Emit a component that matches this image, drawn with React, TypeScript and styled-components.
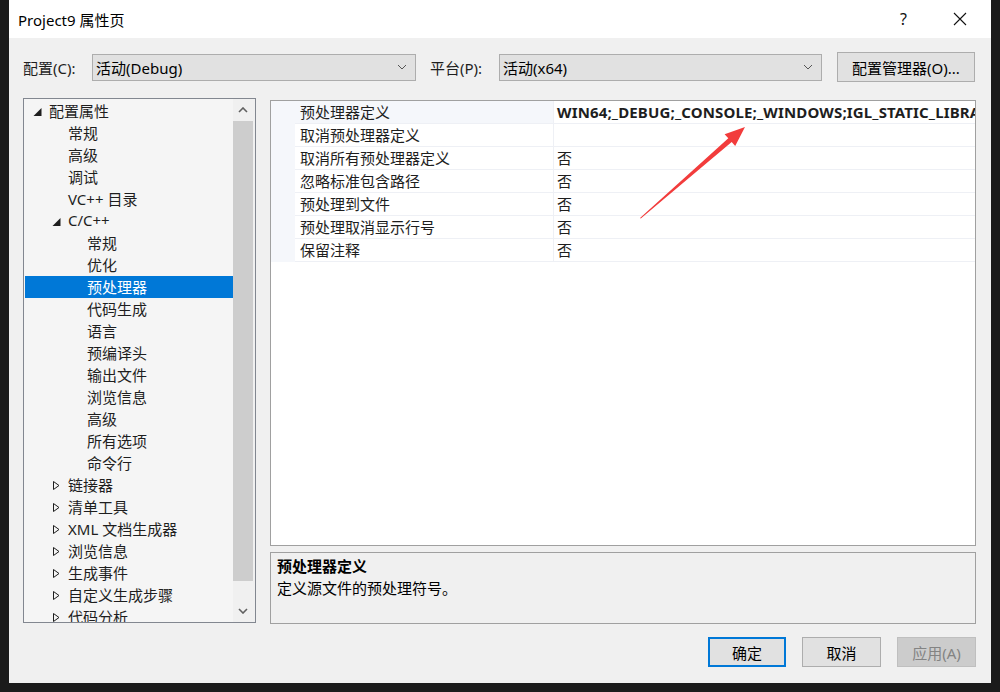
import styled, { createGlobalStyle } from 'styled-components';

const GlobalStyle = createGlobalStyle`
  html, body {
    margin: 0;
    padding: 0;
    background: #1b1b1b;
  }
  * {
    box-sizing: border-box;
  }
`;

type TreeNode = {
  label: string;
  level: number;
  toggle?: 'open' | 'closed';
  selected?: boolean;
};

const treeItems: TreeNode[] = [
  { label: '配置属性', level: 0, toggle: 'open' },
  { label: '常规', level: 1 },
  { label: '高级', level: 1 },
  { label: '调试', level: 1 },
  { label: 'VC++ 目录', level: 1 },
  { label: 'C/C++', level: 1, toggle: 'open' },
  { label: '常规', level: 2 },
  { label: '优化', level: 2 },
  { label: '预处理器', level: 2, selected: true },
  { label: '代码生成', level: 2 },
  { label: '语言', level: 2 },
  { label: '预编译头', level: 2 },
  { label: '输出文件', level: 2 },
  { label: '浏览信息', level: 2 },
  { label: '高级', level: 2 },
  { label: '所有选项', level: 2 },
  { label: '命令行', level: 2 },
  { label: '链接器', level: 1, toggle: 'closed' },
  { label: '清单工具', level: 1, toggle: 'closed' },
  { label: 'XML 文档生成器', level: 1, toggle: 'closed' },
  { label: '浏览信息', level: 1, toggle: 'closed' },
  { label: '生成事件', level: 1, toggle: 'closed' },
  { label: '自定义生成步骤', level: 1, toggle: 'closed' },
  { label: '代码分析', level: 1, toggle: 'closed' },
];

const props = [
  { name: '预处理器定义', value: 'WIN64;_DEBUG;_CONSOLE;_WINDOWS;IGL_STATIC_LIBRARY;%(PreprocessorDefinitions)', strong: true },
  { name: '取消预处理器定义', value: '' },
  { name: '取消所有预处理器定义', value: '否' },
  { name: '忽略标准包含路径', value: '否' },
  { name: '预处理到文件', value: '否' },
  { name: '预处理取消显示行号', value: '否' },
  { name: '保留注释', value: '否' },
];

function Toggle({ kind }: { kind?: 'open' | 'closed' }) {
  return (
    <ToggleBox>
      {kind === 'open' && (
        <svg width="16" height="22" viewBox="0 0 16 22">
          <polygon points="8.5,8 8.5,16 0.5,16" fill="#1e1e1e" />
        </svg>
      )}
      {kind === 'closed' && (
        <svg width="16" height="22" viewBox="0 0 16 22">
          <polygon points="1.5,7.5 7,11.5 1.5,15.5" fill="none" stroke="#1e1e1e" strokeWidth="1" />
        </svg>
      )}
    </ToggleBox>
  );
}

function Chevron({ up }: { up?: boolean }) {
  return (
    <svg width="10" height="6" viewBox="0 0 10 6">
      <polyline points={up ? '1,5 5,1 9,5' : '1,1 5,5 9,1'} fill="none" stroke="#606060" strokeWidth="1.6" />
    </svg>
  );
}

function SelectArrow() {
  return (
    <svg width="10" height="6" viewBox="0 0 10 6">
      <polyline points="1,1 5,5 9,1" fill="none" stroke="#555" strokeWidth="1" />
    </svg>
  );
}

function App() {
  return (
    <Page>
      <GlobalStyle />
      <Dialog>
        <TitleBar>
          <Title>Project9 属性页</Title>
          <TitleButtons>
            <HelpMark>?</HelpMark>
            <svg width="14" height="14" viewBox="0 0 14 14">
              <path d="M1 1 L13 13 M13 1 L1 13" stroke="#111" strokeWidth="1.1" />
            </svg>
          </TitleButtons>
        </TitleBar>

        <Body>
          <TopRow>
            <FieldLabel>配置(C):</FieldLabel>
            <Select width={324}>
              <span>活动(Debug)</span>
              <SelectArrow />
            </Select>
            <FieldLabel gap={14}>平台(P):</FieldLabel>
            <Select width={323}>
              <span>活动(x64)</span>
              <SelectArrow />
            </Select>
            <Button width={138} height={30} offset={15}>配置管理器(O)...</Button>
          </TopRow>

          <Main>
            <TreePanel>
              <TreeList>
                {treeItems.map((item, i) => (
                  <TreeRow key={i} level={item.level} selected={item.selected}>
                    <Toggle kind={item.toggle} />
                    <span>{item.label}</span>
                  </TreeRow>
                ))}
              </TreeList>
              <ScrollBar>
                <ScrollArrow><Chevron up /></ScrollArrow>
                <ScrollTrack>
                  <ScrollThumb />
                </ScrollTrack>
                <ScrollArrow><Chevron /></ScrollArrow>
              </ScrollBar>
            </TreePanel>

            <RightColumn>
              <Grid>
                {props.map((p, i) => (
                  <GridRow key={i}>
                    <Gutter />
                    <NameCell active={i === 0}>{p.name}</NameCell>
                    <ValueCell strong={p.strong}>{p.value}</ValueCell>
                  </GridRow>
                ))}
              </Grid>
              <Description>
                <DescTitle>预处理器定义</DescTitle>
                <DescText>定义源文件的预处理符号。</DescText>
              </Description>
            </RightColumn>
          </Main>

          <Footer>
            <Button width={78} height={30} primary>确定</Button>
            <Button width={79} height={30}>取消</Button>
            <Button width={79} height={30} disabled>应用(A)</Button>
          </Footer>
        </Body>
      </Dialog>

      <Annotation width="1000" height="692" viewBox="0 0 1000 692">
        <polygon
          points="640,218 728.3,138.2 724.6,134.3 745,127 735.2,146 731.7,142 640.8,218.6"
          fill="#f23c3c"
        />
      </Annotation>
    </Page>
  );
}

const Page = styled.div`
  position: relative;
  width: 1000px;
  height: 692px;
  padding-left: 9px;
  background: #1b1b1b;
  font-family: "Noto Sans", "Noto Sans CJK SC", sans-serif;
  font-size: 15px;
  color: #000;
  overflow: hidden;
`;

const Dialog = styled.div`
  width: 982px;
  height: 683px;
  background: #f0f0f0;
  display: flex;
  flex-direction: column;
`;

const TitleBar = styled.div`
  height: 38px;
  flex-shrink: 0;
  background: #ffffff;
  display: flex;
  align-items: center;
  justify-content: space-between;
  padding: 0 24px 0 9px;
`;

const Title = styled.div`
  font-size: 15px;
  color: #000;
`;

const TitleButtons = styled.div`
  display: flex;
  align-items: center;
  gap: 46px;
`;

const HelpMark = styled.span`
  font-size: 16px;
  color: #111;
`;

const Body = styled.div`
  flex: 1;
  display: flex;
  flex-direction: column;
  padding: 14px 15px 0 14px;
`;

const TopRow = styled.div`
  height: 30px;
  display: flex;
  align-items: center;
`;

const FieldLabel = styled.div<{ gap?: number }>`
  width: ${(p) => 69 + (p.gap || 0)}px;
  padding-left: ${(p) => p.gap || 0}px;
  flex-shrink: 0;
  color: #1e1e1e;
`;

const Select = styled.div<{ width: number }>`
  width: ${(p) => p.width}px;
  height: 27px;
  flex-shrink: 0;
  border: 1px solid #adadad;
  background: #e1e1e1;
  display: flex;
  align-items: center;
  justify-content: space-between;
  padding: 0 8px 0 3px;
`;

const Button = styled.div<{ width: number; height: number; primary?: boolean; disabled?: boolean; offset?: number }>`
  width: ${(p) => p.width}px;
  height: ${(p) => p.height}px;
  margin-left: ${(p) => p.offset || 0}px;
  display: flex;
  align-items: center;
  justify-content: center;
  background: ${(p) => (p.disabled ? '#cccccc' : '#e1e1e1')};
  border: ${(p) => (p.primary ? '2px solid #0078d7' : p.disabled ? '1px solid #bfbfbf' : '1px solid #adadad')};
  color: ${(p) => (p.disabled ? '#838383' : '#000')};
  flex-shrink: 0;
`;

const Main = styled.div`
  display: flex;
  gap: 14px;
  margin-top: 16px;
`;

const TreePanel = styled.div`
  width: 233px;
  height: 525px;
  flex-shrink: 0;
  border: 1px solid #828790;
  background: #f5f5f5;
  display: flex;
  overflow: hidden;
`;

const TreeList = styled.div`
  flex: 1;
  min-width: 0;
  padding: 1px 0 0 1px;
  overflow: hidden;
`;

const TreeRow = styled.div<{ level: number; selected?: boolean }>`
  height: 22px;
  display: flex;
  align-items: center;
  padding-left: ${(p) => 8 + p.level * 19}px;
  padding-bottom: 2px;
  background: ${(p) => (p.selected ? '#0078d7' : 'transparent')};
  color: ${(p) => (p.selected ? '#ffffff' : '#1e1e1e')};
  white-space: nowrap;
`;

const ToggleBox = styled.div`
  width: 16px;
  height: 22px;
  flex-shrink: 0;
  margin-bottom: -2px;
  svg {
    display: block;
  }
`;

const ScrollBar = styled.div`
  width: 22px;
  flex-shrink: 0;
  display: flex;
  flex-direction: column;
  background: #f0f0f0;
  padding-right: 2px;
`;

const ScrollArrow = styled.div`
  height: 22px;
  display: flex;
  align-items: center;
  justify-content: center;
`;

const ScrollTrack = styled.div`
  flex: 1;
  padding-bottom: 19px;
`;

const ScrollThumb = styled.div`
  height: 100%;
  background: #cdcdcd;
`;

const RightColumn = styled.div`
  flex: 1;
  min-width: 0;
  margin-top: 2px;
  display: flex;
  flex-direction: column;
  gap: 6px;
`;

const Grid = styled.div`
  height: 446px;
  border: 1px solid #a0a0a0;
  background: #ffffff;
  overflow: hidden;
`;

const GridRow = styled.div`
  height: 23px;
  display: flex;
`;

const Gutter = styled.div`
  width: 24px;
  flex-shrink: 0;
  background: #f5f7fb;
`;

const NameCell = styled.div<{ active?: boolean }>`
  width: 259px;
  flex-shrink: 0;
  display: flex;
  align-items: center;
  padding-left: 5px;
  padding-bottom: 1px;
  background: ${(p) => (p.active ? '#f5f7fb' : '#ffffff')};
  border-bottom: 1px solid #eef0f5;
  border-right: 1px solid #eef0f5;
  color: #1e1e1e;
`;

const ValueCell = styled.div<{ strong?: boolean }>`
  flex: 1;
  min-width: 0;
  display: flex;
  align-items: center;
  padding-left: 3px;
  padding-bottom: 1px;
  border-bottom: 1px solid #eef0f5;
  font-weight: ${(p) => (p.strong ? 700 : 400)};
  letter-spacing: ${(p) => (p.strong ? '0.15px' : '0')};
  white-space: nowrap;
  overflow: hidden;
  color: #1e1e1e;
`;

const Description = styled.div`
  height: 72px;
  border: 1px solid #a0a0a0;
  background: #f0f0f0;
  padding: 1px 6px;
`;

const DescTitle = styled.div`
  height: 22px;
  display: flex;
  align-items: center;
  font-weight: 700;
`;

const DescText = styled.div`
  height: 23px;
  display: flex;
  align-items: center;
`;

const Footer = styled.div`
  display: flex;
  justify-content: flex-end;
  gap: 16px;
  margin-top: 13px;
`;

const Annotation = styled.svg`
  position: absolute;
  left: 0;
  top: 0;
  pointer-events: none;
`;

export default App;
